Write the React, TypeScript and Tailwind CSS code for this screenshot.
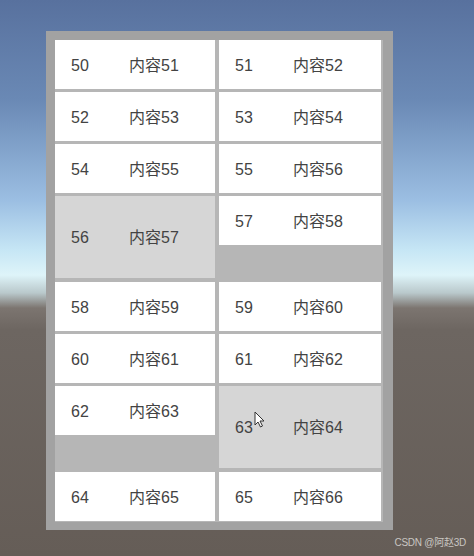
import React from "react";

type Row = { tall?: boolean; cells: { id: number; state: "normal" | "hover" | "short" }[] };

const ROWS: Row[] = [
  { cells: [{ id: 50, state: "normal" }, { id: 51, state: "normal" }] },
  { cells: [{ id: 52, state: "normal" }, { id: 53, state: "normal" }] },
  { cells: [{ id: 54, state: "normal" }, { id: 55, state: "normal" }] },
  { tall: true, cells: [{ id: 56, state: "hover" }, { id: 57, state: "short" }] },
  { cells: [{ id: 58, state: "normal" }, { id: 59, state: "normal" }] },
  { cells: [{ id: 60, state: "normal" }, { id: 61, state: "normal" }] },
  { tall: true, cells: [{ id: 62, state: "short" }, { id: 63, state: "hover" }] },
  { cells: [{ id: 64, state: "normal" }, { id: 65, state: "normal" }] },
];

function Cell({ id, state }: { id: number; state: string }) {
  const bg = state === "hover" ? "bg-[#d6d6d6] h-full" : "bg-white h-[49px]";
  return (
    <div className={`flex items-center pt-[2px] text-[16px] text-[#434343] ${bg}`}>
      <span className="w-[74px] pl-[16px]">{id}</span>
      <span>内容{id + 1}</span>
    </div>
  );
}

export default function App() {
  return (
    <div
      className="relative w-[474px] h-[556px] overflow-hidden pt-[31px] pl-[46px] bg-[linear-gradient(to_bottom,#58719e_0px,#6a89b5_100px,#9bbee2_200px,#c6e6f5_250px,#def4f9_275px,#b9c8cb_293px,#7c7570_308px,#6d6661_330px,#655d57_556px)]"
      style={{ fontFamily: '"Liberation Sans", "Noto Sans CJK SC", sans-serif' }}
    >
      <div className="w-[347px] bg-[#a2a2a2] pt-[9px] pb-[8px] pl-[9px]">
        <div className="w-[328px] bg-[#b6b6b6] grid grid-cols-[160px_162px] gap-[4px] pr-[2px] pb-[2px]">
          {ROWS.map((row, i) =>
            row.cells.map((c) => (
              <div key={`${i}-${c.id}`} className={row.tall ? "h-[82px]" : "h-[48px]"}>
                <Cell id={c.id} state={c.state} />
              </div>
            ))
          )}
        </div>
      </div>

      {/* mouse pointer */}
      <svg className="absolute left-[254px] top-[411px]" width="11" height="17" viewBox="0 0 11 17">
        <path d="M1 1 L1 14 L4 11 L6.5 16 L8.5 15 L6 10 L10 10 Z" fill="#ffffff" stroke="#333333" strokeWidth="1" strokeLinejoin="round" />
      </svg>

      <div className="absolute right-[8px] bottom-[6px] text-[10px] text-[#c9c6c2] tracking-tight">
        CSDN @阿赵3D
      </div>
    </div>
  );
}
